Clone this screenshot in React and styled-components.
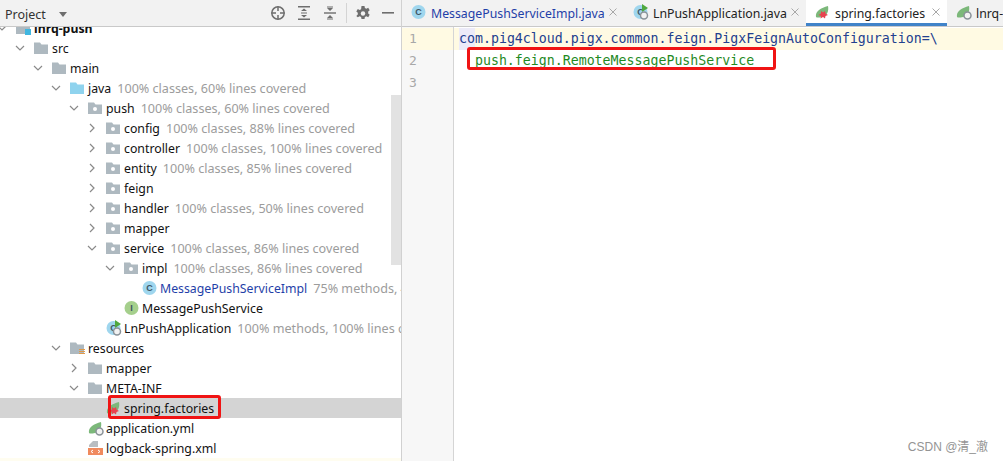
import React from 'react';
import styled, { createGlobalStyle } from 'styled-components';

const Global = createGlobalStyle`
  html, body { margin: 0; padding: 0; background: #fff; overflow: hidden; }
  #root { width: 1003px; height: 461px; }
`;
const Page = styled.div`
  position: relative; width: 1003px; height: 461px; display: flex; overflow: hidden; background: #fff;
  font-family: "Noto Sans", "Open Sans", sans-serif;
`;
const Side = styled.aside`
  width: 401px; flex: none; display: flex; flex-direction: column; border-right: 1px solid #d1d1d1; position: relative;
`;
const Header = styled.header`
  height: 26px; flex: none; background: #f2f2f2; border-bottom: 1px solid #c9c9c9; display: flex; align-items: center;
  padding-left: 5px; padding-right: 6px; position: relative; z-index: 2; font-size: 12.5px; color: #333;
`;
const Title = styled.span`
  margin-top: 2px;
`;
const Caret = styled.span`
  width: 0; height: 0; margin-left: 13px; margin-top: 2px; border-left: 4px solid transparent; border-right: 4px solid transparent; border-top: 5px solid #6e6e6e;
`;
const Tools = styled.div`
  margin-left: auto; display: flex; align-items: center; gap: 10px;
  svg { display: block; flex: none; }
`;
const ToolDivider = styled.span`
  width: 1px; height: 20px; background: #d4d4d4; margin: 0 -2px;
`;
const Tree = styled.div`
  flex: 1; margin-top: -9px; position: relative; overflow: hidden;
`;
const RowEl = styled.div`
  height: 20px; box-sizing: border-box; display: flex; align-items: center; white-space: nowrap; font-size: 12.3px; color: ${p => p.$blue ? '#1f3fa8' : '#111'};
  font-weight: ${p => p.$bold ? 700 : 400};
  background: ${p => p.$selected ? '#d4d4d4' : 'transparent'};
  padding-left: ${p => p.$depth * 18}px; overflow: hidden;
`;
const ChevSlot = styled.span`
  width: 16px; flex: none; display: flex; svg { margin-left: -4px; display: block; }
`;
const IconSlot = styled.span`
  width: 16px; height: 16px; flex: none; margin-right: 2px; display: block; svg { display: block; }
`;
const Coverage = styled.span`
  color: #9c9c9c; font-weight: 400; margin-left: 6px; font-size: 12.6px;
`;
const Scrollbar = styled.div`
  position: absolute; right: 0; top: 77px; width: 10px; height: 170px; background: #e2e2e2;
`;
const Bottom = styled.div`
  position: absolute; left: 0; right: 0; bottom: 0; height: 3px; background: #fffdf0;
`;
const Main = styled.main`
  flex: 1; display: flex; flex-direction: column; min-width: 0;
`;
const Tabs = styled.nav`
  height: 26px; flex: none; background: #f2f2f2; border-bottom: 1px solid #c9c9c9; display: flex; overflow: hidden;
`;
const Tab = styled.div`
  height: 26px; box-sizing: border-box; display: flex; align-items: center; flex: none; font-size: 12.3px; color: ${p => p.$blue ? '#1f3fa8' : '#222'};
  padding: 4px 0 0 9px; white-space: nowrap; width: ${p => p.$w}px;
  background: ${p => p.$active ? '#fff' : 'transparent'};
  border-bottom: 3px solid ${p => p.$active ? '#4083c9' : 'transparent'};
`;
const TabIcon = styled.span`
  width: 16px; height: 16px; flex: none; margin-right: 4px; margin-top: -3px; svg { display: block; }
`;
const Close = styled.span`
  margin-left: auto; margin-right: 7px; width: 8px; height: 8px; flex: none; display: block; margin-top: -3px; svg { display: block; }
`;
const Editor = styled.div`
  flex: 1; display: flex; min-height: 0;
`;
const Gutter = styled.div`
  width: 51px; flex: none; border-right: 1px solid #d5d5d5; background: #f7f7f7; font: 13px "DejaVu Sans Mono", monospace; color: #a8a8a8;
  padding-top: 1px;
`;
const GutterLine = styled.div`
  height: 22px; line-height: 22px; padding-left: 7px; background: ${p => p.$current ? '#fffae3' : 'transparent'};
`;
const Code = styled.div`
  flex: 1; padding-top: 1px; font: 13.25px "DejaVu Sans Mono", monospace; white-space: pre;
`;
const CodeLine = styled.div`
  height: 22px; line-height: 22px; padding-left: 5px; background: ${p => p.$current ? '#fffae3' : 'transparent'}; color: ${p => p.$green ? '#1f8a1f' : '#23408f'};
`;
const Mark = styled.span`
  display: inline-block; background: #ecebf8;
`;
const RedBox = styled.div`
  position: absolute; border: 3px solid #f01414; border-radius: 3px; box-sizing: border-box;
  left: ${p => p.$x}px; top: ${p => p.$y}px; width: ${p => p.$w}px; height: ${p => p.$h}px;
`;
const Watermark = styled.div`
  position: absolute; right: 15px; bottom: 7px; font-size: 12px; color: #949494; font-family: "Liberation Sans", "Noto Sans CJK SC", sans-serif;
`;

const Chevron = ({ open }) => (
  <svg width="12" height="12" viewBox="0 0 12 12" fill="none" stroke="#8a8a8a" strokeWidth="1.2">
    {open ? <path d="M2 4l4 4 4-4" /> : <path d="M4 2l4 4-4 4" />}
  </svg>
);
const Folder = ({ color = '#aeb9c0', dot, badge }) => (
  <svg width="16" height="16" viewBox="0 0 16 16">
    <path d="M0 2.500h6l1.500 2H14v9.500H0z" fill={color} />
    {dot && <circle cx="7" cy="9" r="2" fill="#fff" />}
    {badge === 'module' && <rect x="9" y="9" width="6" height="6" fill="#40b6e0" />}
    {badge === 'res' && <g stroke="#e09a4a" strokeWidth="1"><path d="M9 9.500h6M9 11.500h6M9 13.500h6" /></g>}
  </svg>
);
const ClassIcon = ({ letter = 'C', bg = '#9fd6ee', run, gear }) => (
  <svg width="16" height="16" viewBox="0 0 16 16">
    <circle cx="7.500" cy="8" r="7" fill={bg} />
    <text x="7.500" y="11" textAnchor="middle" fontSize="9" fontWeight="700" fontFamily="Liberation Sans, sans-serif" fill="#3e5563">{letter}</text>
    {run && <path d="M9 0l6 4-6 4z" fill="#4fa83d" />}
    {gear && <circle cx="11" cy="11.500" r="3.500" fill="#f2f2f2" stroke="#8a9298" strokeWidth="1.500" />}
  </svg>
);
const SpringIcon = ({ bug, gear }) => (
  <svg width="16" height="16" viewBox="0 0 16 16">
    <path d="M1 13C0 7 6 4 13 2c1 5-1 10-6 11-3 .6-5 1-6 0z" fill="#7cb87a" />
    {bug && <path d="M6 7l2 1.500L10 7l.5 2.500L13 11l-2.500 1L10 14.500 8 13l-2.500 1.500.5-2.500L3.500 11 6 9.500z" fill="#e8434f" />}
    {gear && <circle cx="11.500" cy="11.500" r="3.500" fill="#f2f2f2" stroke="#8a9298" strokeWidth="1.500" />}
  </svg>
);
const XmlIcon = () => (
  <svg width="16" height="16" viewBox="0 0 16 16">
    <path d="M5 1h5v6H1V5z" fill="#b9bec2" />
    <rect x="0" y="8" width="15" height="7" fill="#f08a5d" />
    <path d="M5 10l-2 1.500L5 13M10 10l2 1.500L10 13" stroke="#fff" fill="none" strokeWidth="1" />
  </svg>
);
const Locate = () => (
  <svg width="16" height="16" viewBox="0 0 16 16" fill="none" stroke="#6e6e6e" strokeWidth="1.500">
    <circle cx="8" cy="8" r="6.200" /><path d="M8 1.500v4.500M8 10v4.500M1.500 8H6M10 8h4.500" />
  </svg>
);
const Expand = () => (
  <svg width="16" height="16" viewBox="0 0 16 16" fill="#6e6e6e">
    <rect x="2" y="1" width="12" height="1.500" /><rect x="2" y="13.500" width="12" height="1.500" />
    <path d="M8 3.500l3 2.500H5zM8 12.500l3-2.500H5z" /><rect x="5" y="7.500" width="6" height="1" />
  </svg>
);
const Collapse = () => (
  <svg width="16" height="16" viewBox="0 0 16 16" fill="#6e6e6e">
    <rect x="2" y="7.300" width="12" height="1.400" />
    <path d="M8 6l3-3H5zM8 10l3 3H5z" /><rect x="5" y="1.500" width="6" height="1" /><rect x="5" y="13.500" width="6" height="1" />
  </svg>
);
const Gear = () => (
  <svg width="16" height="16" viewBox="0 0 16 16">
    <path d="M6.500 1h3l.4 2 1.500.7 1.800-1 1.500 2.500-1.500 1.400v1.800l1.500 1.400-1.500 2.500-1.800-1-1.500.7-.4 2h-3l-.4-2-1.500-.7-1.800 1L1.300 11l1.500-1.400V7.800L1.300 6.400 2.800 3.900l1.800 1 1.500-.7z" fill="#6e6e6e" />
    <circle cx="8" cy="8.500" r="2.200" fill="#f2f2f2" />
  </svg>
);
const Minus = () => (
  <svg width="14" height="16" viewBox="0 0 14 16"><rect x="1" y="7" width="12" height="1.600" fill="#6e6e6e" /></svg>
);
const X = () => (
  <svg width="8" height="8" viewBox="0 0 8 8" stroke="#a8a8a8" strokeWidth="1"><path d="M.5.500l7 7M7.500.500l-7 7" /></svg>
);

const rows = [
  { d: 0, open: true, icon: <Folder badge="module" />, name: 'lnrq-push', bold: true },
  { d: 1, open: true, icon: <Folder />, name: 'src' },
  { d: 2, open: true, icon: <Folder />, name: 'main' },
  { d: 3, open: true, icon: <Folder color="#8fd3ee" />, name: 'java', cov: '100% classes, 60% lines covered' },
  { d: 4, open: true, icon: <Folder dot />, name: 'push', cov: '100% classes, 60% lines covered' },
  { d: 5, open: false, icon: <Folder dot />, name: 'config', cov: '100% classes, 88% lines covered' },
  { d: 5, open: false, icon: <Folder dot />, name: 'controller', cov: '100% classes, 100% lines covered' },
  { d: 5, open: false, icon: <Folder dot />, name: 'entity', cov: '100% classes, 85% lines covered' },
  { d: 5, open: false, icon: <Folder dot />, name: 'feign' },
  { d: 5, open: false, icon: <Folder dot />, name: 'handler', cov: '100% classes, 50% lines covered' },
  { d: 5, open: false, icon: <Folder dot />, name: 'mapper' },
  { d: 5, open: true, icon: <Folder dot />, name: 'service', cov: '100% classes, 86% lines covered' },
  { d: 6, open: true, icon: <Folder dot />, name: 'impl', cov: '100% classes, 86% lines covered' },
  { d: 7, icon: <ClassIcon />, name: 'MessagePushServiceImpl', blue: true, cov: '75% methods, 40% lines covered' },
  { d: 6, icon: <ClassIcon letter="I" bg="#a5cf8c" />, name: 'MessagePushService' },
  { d: 5, icon: <ClassIcon run gear />, name: 'LnPushApplication', cov: '100% methods, 100% lines covered' },
  { d: 3, open: true, icon: <Folder badge="res" />, name: 'resources' },
  { d: 4, open: false, icon: <Folder />, name: 'mapper' },
  { d: 4, open: true, icon: <Folder />, name: 'META-INF' },
  { d: 5, icon: <SpringIcon bug />, name: 'spring.factories', selected: true },
  { d: 4, icon: <SpringIcon gear />, name: 'application.yml' },
  { d: 4, icon: <XmlIcon />, name: 'logback-spring.xml' },
];

const Row = ({ r }) => (
  <RowEl $depth={r.d} $bold={r.bold} $blue={r.blue} $selected={r.selected}>
    <ChevSlot>{r.open !== undefined && <Chevron open={r.open} />}</ChevSlot>
    <IconSlot>{r.icon}</IconSlot>
    <span>{r.name}</span>
    {r.cov && <Coverage>{r.cov}</Coverage>}
  </RowEl>
);

export default function App() {
  return (
    <Page>
      <Global />
      <Side>
        <Header>
          <Title>Project</Title><Caret />
          <Tools>
            <Locate /><Expand /><Collapse /><ToolDivider /><Gear /><Minus />
          </Tools>
        </Header>
        <Tree>
          {rows.map((r, i) => <Row key={i} r={r} />)}
          <Scrollbar />
        </Tree>
        <Bottom />
      </Side>
      <Main>
        <Tabs>
          <Tab $w={222} $blue><TabIcon><ClassIcon /></TabIcon><span>MessagePushServiceImpl.java</span><Close><X /></Close></Tab>
          <Tab $w={182}><TabIcon><ClassIcon run gear /></TabIcon><span>LnPushApplication.java</span><Close><X /></Close></Tab>
          <Tab $w={141} $active><TabIcon><SpringIcon bug /></TabIcon><span>spring.factories</span><Close><X /></Close></Tab>
          <Tab $w={130}><TabIcon><SpringIcon gear /></TabIcon><span>lnrq-push.iml</span></Tab>
        </Tabs>
        <Editor>
          <Gutter>
            <GutterLine $current>1</GutterLine>
            <GutterLine>2</GutterLine>
            <GutterLine>3</GutterLine>
          </Gutter>
          <Code>
            <CodeLine $current><Mark>co</Mark>m.pig4cloud.pigx.common.feign.PigxFeignAutoConfiguration=\</CodeLine>
            <CodeLine $green>  push.feign.RemoteMessagePushService</CodeLine>
            <CodeLine> </CodeLine>
          </Code>
        </Editor>
      </Main>
      <RedBox $x={108} $y={395} $w={113} $h={24} />
      <RedBox $x={467} $y={47} $w={309} $h={23} />
      <Watermark>CSDN @清_澈</Watermark>
    </Page>
  );
}
